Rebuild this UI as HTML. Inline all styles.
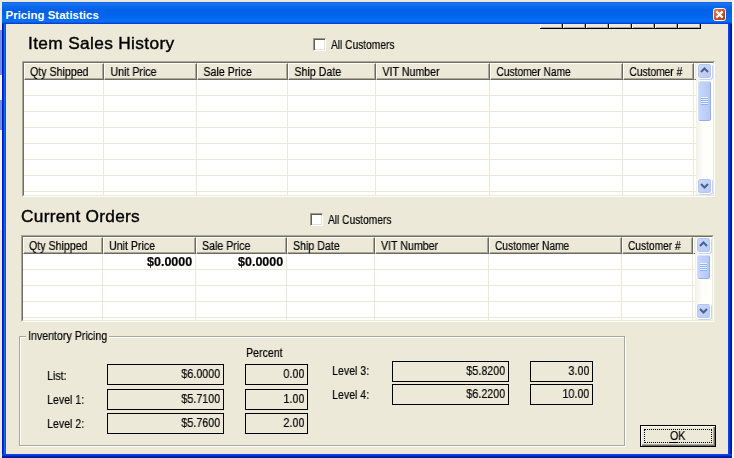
<!DOCTYPE html>
<html><head><meta charset="utf-8">
<title>Pricing Statistics</title>
<style>
*{box-sizing:border-box;margin:0;padding:0}
html,body{width:734px;height:458px;overflow:hidden;background:#ece9d8}
body{position:relative;font-family:"Liberation Sans",Arial,sans-serif;color:#000}
.abs{position:absolute}
#win{position:absolute;left:2px;top:2px;width:730px;height:456px;background:#0855dd}
#title{position:absolute;left:0;top:0;width:730px;height:22px;border-radius:1px 1px 0 0;
 background:linear-gradient(to bottom,#0a5ce6 0,#1c76f3 1.5px,#0c6aee 4px,#0361e8 8px,#0262ea 13px,#056bf3 17px,#066ef7 19.5px,#0452de 21px,#0030c8 22px)}
#title .cap{position:absolute;left:3.5px;top:7px;font-weight:bold;font-size:11.5px;line-height:13px;color:#fff;white-space:nowrap;letter-spacing:0}
#client{position:absolute;left:4px;top:22px;width:722px;height:430px;background:#ece9d8}
.t{position:absolute;white-space:nowrap;font-size:12.5px;line-height:14px;transform:scaleX(.85);transform-origin:0 0;will-change:transform;-webkit-text-stroke:.2px #000}
.tr{transform-origin:100% 0;text-align:right}
.big{position:absolute;white-space:nowrap;font-size:17.3px;line-height:20px;letter-spacing:.35px;will-change:transform;-webkit-text-stroke:.4px #000}
.grid{position:absolute;background:#fff;border:1px solid;border-color:#aca899 #fff #fff #aca899}
.grid .in{position:absolute;left:0;top:0;right:0;bottom:0;border:1px solid;border-color:#716f64 #ece9d8 #ece9d8 #716f64;overflow:hidden;
 background-image:linear-gradient(#ece9d8,#ece9d8);background-size:100% 1px;background-repeat:no-repeat}
.hl{position:absolute;left:0;width:672px;height:1px;background:#ebe8d7}
.vl{position:absolute;top:0;bottom:0;width:1px;background:#ebe8d7}
.hc{position:absolute;top:0;height:17px;background:#ece9d8;border:1px solid;border-color:#fff #6b6a5e #6b6a5e #fff;box-shadow:inset -1px -1px 0 #aca899}
.sb{position:absolute;top:0;bottom:0;width:17px;background:linear-gradient(to right,#f1f0e8,#fdfdfa 40%,#fefefb)}
.sbtn{position:absolute;left:1px;width:15px;height:16px;border:1px solid #fff;border-radius:3px;background:linear-gradient(135deg,#cad9fd,#b7caf7);box-shadow:inset 0 0 0 1px #b3c6f4,1px 1px 0 #c4d2f4}
.thumb{position:absolute;left:1px;width:15px;border:1px solid #fff;border-radius:3px;background:linear-gradient(to right,#c9d8fc,#bccdf9 60%,#b4c6f4);box-shadow:inset -1px -1px 0 #98b0ea,inset 1px 1px 0 #d4e0fd}
.cb{position:absolute;width:13px;height:13px;background:#fff;border:1px solid;border-color:#9d9a8b #fff #fff #9d9a8b;box-shadow:inset 1px 1px 0 #5f5e54,inset -1px -1px 0 #e4e1d2}
.c{transform:scaleX(.815)}
.s{transform:translateX(.5px) scaleX(.85)}
.s.c{transform:translateX(.5px) scaleX(.815)}
.b{font-weight:bold;transform:none}
.n{transform:scaleX(.86)}
.grip{position:absolute;left:3px;top:50%;margin-top:-4px;width:7px;height:8px;background:repeating-linear-gradient(to bottom,#eef4fe 0,#eef4fe 1px,#8cb0f8 1px,#8cb0f8 2px)}
.box{position:absolute;height:21px;border:1px solid #000;background:#ece9d8}
</style></head><body>
<div class="abs" style="left:732px;top:0;width:2px;height:458px;background:#fbfbf8"></div>
<div class="abs" style="left:0;top:30px;width:2px;height:428px;background:linear-gradient(to bottom,#6f8fe0 0,#6f8fe0 45px,#f4f4f0 45px,#f4f4f0 70px,#6f8fe0 70px,#6f8fe0 100px,#f4f4f0 100px,#f4f4f0 200px,#ece9d8 200px)"></div>
<div id="win">
 <div id="title"><span class="cap">Pricing Statistics</span>
  <svg class="abs" style="left:711px;top:6px" width="13" height="13" viewBox="0 0 13 13"><defs><linearGradient id="cg" x1="0" y1="0" x2="1" y2="1"><stop offset="0" stop-color="#ea8a66"/><stop offset=".45" stop-color="#d8512c"/><stop offset="1" stop-color="#b42e0c"/></linearGradient></defs><rect x=".5" y=".5" width="12" height="12" rx="2" fill="url(#cg)" stroke="#fff"/><path d="M3.4 3.4l6.2 6.2M9.6 3.4l-6.2 6.2" stroke="#fff" stroke-width="2.2"/></svg>
 </div>
<div class="abs" style="left:0;top:22px;width:4px;height:434px;background:linear-gradient(to right,#0019cf 0,#0019cf 1px,#0a2cd6 1px,#0a2cd6 2px,#166aee 2px,#166aee 3px,#0855dd 3px)"></div>
 <div class="abs" style="left:726px;top:22px;width:4px;height:434px;background:linear-gradient(to right,#0a44e6 0,#0a44e6 1px,#0838d8 1px,#0838d8 2px,#0020b0 2px,#0020b0 3px,#001590 3px)"></div>
 <div class="abs" style="left:0;top:452px;width:730px;height:4px;background:linear-gradient(to bottom,#0a44e6 0,#0a44e6 1px,#0838d8 1px,#0838d8 2px,#0020b0 2px,#0020b0 3px,#001590 3px)"></div>
 <div id="client"><div class="abs" style="left:-6px;top:-24px;width:734px;height:458px">
<div class="abs" style="left:540px;top:24px;width:161px;height:5px;border-bottom:1px solid #000;background:repeating-linear-gradient(to right,#fff 0,#fff 1px,transparent 1px,transparent 21px,#aca899 21px,#aca899 22px,#000 22px,#000 23px),linear-gradient(to bottom,transparent 3px,#aca899 3px)"></div>
<span class="big" style="left:28px;top:33px">Item Sales History</span>
<div class="cb" style="left:313px;top:38px"></div><span class="t c" style="left:331px;top:38px">All Customers</span>
<div class="grid" style="left:22px;top:61px;width:693px;height:136px"><div class="in">
<div class="hl" style="top:32px"></div><div class="hl" style="top:48px"></div><div class="hl" style="top:64px"></div><div class="hl" style="top:80px"></div><div class="hl" style="top:96px"></div><div class="hl" style="top:112px"></div><div class="hl" style="top:128px"></div>
<div class="vl" style="left:79px"></div><div class="vl" style="left:172px"></div><div class="vl" style="left:263px"></div><div class="vl" style="left:351px"></div><div class="vl" style="left:465px"></div><div class="vl" style="left:598px"></div><div class="vl" style="left:669px"></div>
<div class="hc" style="left:0px;width:80px"><span class="t" style="left:5px;top:1px">Qty Shipped</span></div><div class="hc" style="left:80px;width:93px"><span class="t s" style="left:5px;top:1px">Unit Price</span></div><div class="hc" style="left:173px;width:91px"><span class="t s" style="left:5px;top:1px">Sale Price</span></div><div class="hc" style="left:264px;width:88px"><span class="t s" style="left:5px;top:1px">Ship Date</span></div><div class="hc" style="left:352px;width:114px"><span class="t s" style="left:5px;top:1px">VIT Number</span></div><div class="hc" style="left:466px;width:133px"><span class="t c s" style="left:5px;top:1px">Customer Name</span></div><div class="hc" style="left:599px;width:71px"><span class="t c s" style="left:5px;top:1px">Customer #</span></div><div class="hc" style="left:670px;width:20px;border-right:0;box-shadow:none"></div>
<div class="sb" style="left:672px"><div class="sbtn" style="top:0"><svg width="15" height="15" viewBox="0 0 15 15" class="abs" style="left:-1px;top:-1px"><path d="M4 9l3.5-3.5L11 9" fill="none" stroke="#4d6185" stroke-width="2"/></svg></div><div class="thumb" style="top:17px;height:42px"><div class="grip"></div></div><div class="sbtn" style="top:115px"><svg width="15" height="15" viewBox="0 0 15 15" class="abs" style="left:-1px;top:-1px"><path d="M4 6l3.5 3.5L11 6" fill="none" stroke="#4d6185" stroke-width="2"/></svg></div></div>
</div></div>
<span class="big" style="left:21px;top:206px;letter-spacing:.27px">Current Orders</span>
<div class="cb" style="left:310px;top:213px"></div><span class="t c" style="left:328px;top:213px">All Customers</span>
<div class="grid" style="left:21px;top:235px;width:693px;height:87px"><div class="in">
<div class="hl" style="top:32px"></div><div class="hl" style="top:48px"></div><div class="hl" style="top:64px"></div><div class="hl" style="top:80px"></div>
<div class="vl" style="left:79px"></div><div class="vl" style="left:172px"></div><div class="vl" style="left:263px"></div><div class="vl" style="left:351px"></div><div class="vl" style="left:465px"></div><div class="vl" style="left:598px"></div><div class="vl" style="left:669px"></div>
<div class="hc" style="left:0px;width:80px"><span class="t" style="left:5px;top:1px">Qty Shipped</span></div><div class="hc" style="left:80px;width:93px"><span class="t" style="left:5px;top:1px">Unit Price</span></div><div class="hc" style="left:173px;width:91px"><span class="t" style="left:5px;top:1px">Sale Price</span></div><div class="hc" style="left:264px;width:88px"><span class="t" style="left:5px;top:1px">Ship Date</span></div><div class="hc" style="left:352px;width:114px"><span class="t" style="left:5px;top:1px">VIT Number</span></div><div class="hc" style="left:466px;width:133px"><span class="t c" style="left:5px;top:1px">Customer Name</span></div><div class="hc" style="left:599px;width:71px"><span class="t c" style="left:5px;top:1px">Customer #</span></div><div class="hc" style="left:670px;width:20px;border-right:0;box-shadow:none"></div>
<span class="t tr b" style="right:520px;top:18px">$0.0000</span><span class="t tr b" style="right:429px;top:18px">$0.0000</span>
<div class="sb" style="left:672px"><div class="sbtn" style="top:0"><svg width="15" height="15" viewBox="0 0 15 15" class="abs" style="left:-1px;top:-1px"><path d="M4 9l3.5-3.5L11 9" fill="none" stroke="#4d6185" stroke-width="2"/></svg></div><div class="thumb" style="top:17px;height:26px"><div class="grip"></div></div><div class="sbtn" style="top:66px"><svg width="15" height="15" viewBox="0 0 15 15" class="abs" style="left:-1px;top:-1px"><path d="M4 6l3.5 3.5L11 6" fill="none" stroke="#4d6185" stroke-width="2"/></svg></div></div>
</div></div>
<div class="abs" style="left:20px;top:337px;width:606px;height:110px;border:1px solid #fff"></div><div class="abs" style="left:19px;top:336px;width:606px;height:110px;border:1px solid #aca899"></div>
<div class="abs" style="left:26px;top:329px;width:83px;height:14px;background:#ece9d8"></div><span class="t" style="left:28px;top:329px">Inventory Pricing</span>
<span class="t" style="left:246px;top:346px">Percent</span>
<span class="t" style="left:47px;top:369px">List:</span><div class="box" style="left:107px;top:364px;width:117px"><span class="t tr n" style="right:3px;top:2px">$6.0000</span></div><div class="box" style="left:245px;top:364px;width:63px"><span class="t tr n" style="right:3px;top:2px">0.00</span></div>
<span class="t" style="left:47px;top:393px">Level 1:</span><div class="box" style="left:107px;top:389px;width:117px"><span class="t tr n" style="right:3px;top:2px">$5.7100</span></div><div class="box" style="left:245px;top:389px;width:63px"><span class="t tr n" style="right:3px;top:2px">1.00</span></div>
<span class="t" style="left:47px;top:417px">Level 2:</span><div class="box" style="left:107px;top:413px;width:117px"><span class="t tr n" style="right:3px;top:2px">$5.7600</span></div><div class="box" style="left:245px;top:413px;width:63px"><span class="t tr n" style="right:3px;top:2px">2.00</span></div>
<span class="t" style="left:332px;top:364px">Level 3:</span><div class="box" style="left:392px;top:361px;width:117px"><span class="t tr n" style="right:3px;top:2px">$5.8200</span></div><div class="box" style="left:530px;top:361px;width:63px"><span class="t tr n" style="right:3px;top:2px">3.00</span></div>
<span class="t" style="left:332px;top:388px">Level 4:</span><div class="box" style="left:392px;top:384px;width:117px"><span class="t tr n" style="right:3px;top:2px">$6.2200</span></div><div class="box" style="left:530px;top:384px;width:63px"><span class="t tr n" style="right:3px;top:2px">10.00</span></div>
<div class="abs" style="left:640px;top:425px;width:76px;height:22px;border:1px solid #000;background:#ece9d8;box-shadow:inset 1px 1px 0 #fff,inset -1px -1px 0 #716f64,inset -2px -2px 0 #aca899"><div class="abs" style="left:3px;top:3px;right:3px;bottom:3px;border:1px dotted #000"></div><span class="t" style="left:29px;top:3px"><u style="text-underline-offset:2px">O</u>K</span></div>
</div></div>
</div>
</body></html>
